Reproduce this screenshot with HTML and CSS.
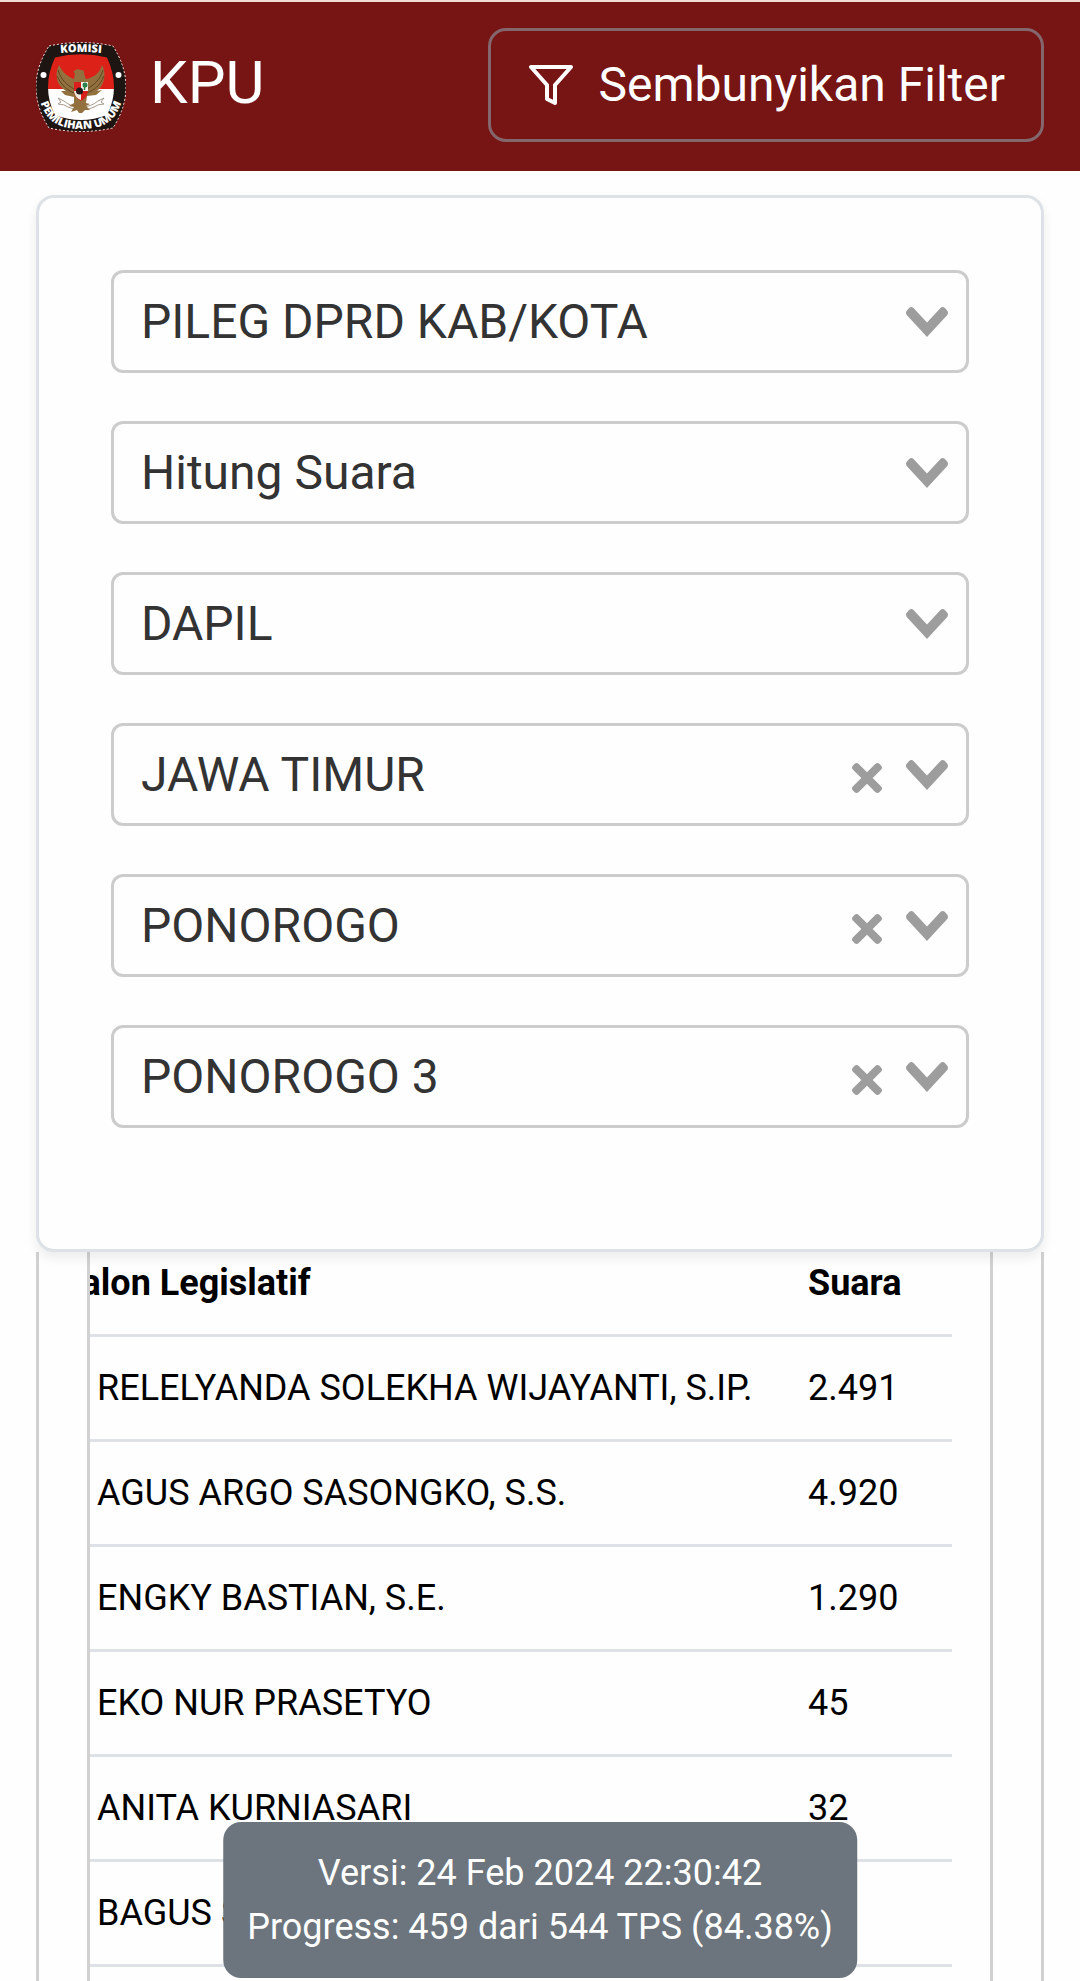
FILE: index.html
```html
<!DOCTYPE html>
<html lang="id">
<head>
<meta charset="utf-8">
<meta name="viewport" content="width=device-width, initial-scale=1">
<title>KPU - Hitung Suara</title>
<link rel="stylesheet" href="styles.css">
</head>
<body>
<svg class="sprite" aria-hidden="true">
  <symbol id="chevron" viewBox="0 0 14 10"><path d="M9.211364 7.59931l4.48338-4.867229c.407008-.441854.407008-1.158247 0-1.60046l-.73712-.80023c-.407008-.441854-1.066904-.441854-1.474243 0L7 5.198617 2.51662.33139c-.407008-.441853-1.066904-.441853-1.474243 0l-.737121.80023c-.407008.441854-.407008 1.158248 0 1.600461l4.48338 4.867228L7 10l2.211364-2.40069z"/></symbol>
  <symbol id="cross" viewBox="0 0 10 10"><path d="M6.895455 5l2.842897-2.842898c.348864-.348863.348864-.914488 0-1.263636L9.106534.261648c-.348864-.348864-.914489-.348864-1.263636 0L5 3.104545 2.157102.261648c-.348863-.348864-.914488-.348864-1.263636 0L.261648.893466c-.348864.348864-.348864.914489 0 1.263636L3.104545 5 .261648 7.842898c-.348864.348863-.348864.914488 0 1.263636l.631818.631818c.348864.348864.914773.348864 1.263636 0L5 6.895455l2.842898 2.842897c.348863.348864.914772.348864 1.263636 0l.631818-.631818c.348864-.348864.348864-.914489 0-1.263636L6.895455 5z"/></symbol>
</svg>

<header class="navbar">
  <a class="brand" href="#">
    <svg class="brand-logo" viewBox="0 0 90 90" aria-hidden="true">
      <defs>
        <path id="arc-top" d="M12 12.500Q45 7.500 78 12.500"/>
        <path id="arc-bottom" d="M2 52C8 76 18 87 45 87S82 76 88 52"/>
        <clipPath id="shield"><path d="M19 15.500Q45 9 71 15.500Q85 46 71 73Q45 83 19 73Q5 46 19 15.500Z"/></clipPath>
      </defs>
      <path d="M13 4Q45-3 77 4Q103 45 77 86Q45 93 13 86Q-13 45 13 4Z" fill="#1d1512" stroke="#f3e8e6" stroke-width="1" stroke-dasharray="2 2"/>
      <g clip-path="url(#shield)">
        <path d="M0 0H90V47H0Z" fill="#dc2119"/>
        <path d="M0 47H90V90H0Z" fill="#fff"/>
      </g>
      <circle cx="7.500" cy="33" r="3" fill="#fff"/>
      <circle cx="82.500" cy="33" r="3" fill="#fff"/>
      <path d="M22 56l6 3q7 6 17 6q10 0 17-6l6-3l-3 4l3 2q-6 0-10 3q-6 3-13 3q-7 0-13-3q-4-3-10-3l3-2Z" fill="#fff" stroke="#a79b8c" stroke-width="1"/>
      <path d="M23 23C27 31 32 35 38 37L39 31L37 30Q40 26 45 28Q49 28 48 32L50 37C57 36 64 31 66 23C71 32 68 44 61 49L66 48L60 53L51 54L50 61L54 62L50 64L54 68L49 68L46 71L43 71L41 68L35 70L38 65L33 64L38 61L38 55L29 53L25 49L30 49C21 44 18 33 23 23Z" fill="#92713f"/>
      <path d="M22 28C25 38 31 43 38 47M21 34C26 44 31 48 38 51M67 28C64 38 58 43 51 47M68 34C64 44 58 48 51 51" fill="none" stroke="#5e4423" stroke-width="1"/>
      <path d="M38 40H52V49Q51 56 45 59Q39 56 38 49Z" fill="#d9201c"/>
      <path d="M45 40H52V49H45Z" fill="#f4f1e9"/>
      <path d="M38 49H45V58Q39 56 38 49Z" fill="#f0e9df"/>
      <circle cx="49" cy="43" r="2.500" fill="#29824a"/>
      <path d="M48.500 43v5" stroke="#29824a" stroke-width="1.500"/>
      <circle cx="43.500" cy="49" r="3.500" fill="#211b19"/>
      <text class="logo-text" text-anchor="middle"><textPath href="#arc-top" startOffset="50%">KOMISI</textPath></text>
      <text class="logo-text" text-anchor="middle"><textPath href="#arc-bottom" startOffset="50%">PEMILIHAN UMUM</textPath></text>
    </svg>
    <span class="brand-name">KPU</span>
  </a>
  <button class="filter-toggle" type="button">
    <svg class="funnel" viewBox="0 0 44 40" aria-hidden="true"><path d="M2 2H42L26 20V38L18 34V20Z"/></svg>
    <span>Sembunyikan Filter</span>
  </button>
</header>

<main class="content">
  <form class="filters">
    <div class="field">
      <select aria-label="Jenis pemilihan"><option>PILEG DPRD KAB/KOTA</option></select>
      <div class="actions"><svg class="chevron" aria-hidden="true"><use href="#chevron"/></svg></div>
    </div>
    <div class="field">
      <select aria-label="Tampilan"><option>Hitung Suara</option></select>
      <div class="actions"><svg class="chevron" aria-hidden="true"><use href="#chevron"/></svg></div>
    </div>
    <div class="field">
      <select aria-label="Pembagian wilayah"><option>DAPIL</option></select>
      <div class="actions"><svg class="chevron" aria-hidden="true"><use href="#chevron"/></svg></div>
    </div>
    <div class="field">
      <select aria-label="Provinsi"><option>JAWA TIMUR</option></select>
      <div class="actions"><button class="clear" type="button" aria-label="Hapus provinsi"><svg aria-hidden="true"><use href="#cross"/></svg></button><svg class="chevron" aria-hidden="true"><use href="#chevron"/></svg></div>
    </div>
    <div class="field">
      <select aria-label="Kabupaten"><option>PONOROGO</option></select>
      <div class="actions"><button class="clear" type="button" aria-label="Hapus kabupaten"><svg aria-hidden="true"><use href="#cross"/></svg></button><svg class="chevron" aria-hidden="true"><use href="#chevron"/></svg></div>
    </div>
    <div class="field">
      <select aria-label="Daerah pemilihan"><option>PONOROGO 3</option></select>
      <div class="actions"><button class="clear" type="button" aria-label="Hapus daerah pemilihan"><svg aria-hidden="true"><use href="#cross"/></svg></button><svg class="chevron" aria-hidden="true"><use href="#chevron"/></svg></div>
    </div>
  </form>

  <section class="panel">
    <div class="panel-inner">
      <table class="results">
        <thead>
          <tr><th scope="col">Calon Legislatif</th><th class="votes" scope="col">Suara</th></tr>
        </thead>
        <tbody>
          <tr><td>RELELYANDA SOLEKHA WIJAYANTI, S.IP.</td><td>2.491</td></tr>
          <tr><td>AGUS ARGO SASONGKO, S.S.</td><td>4.920</td></tr>
          <tr><td>ENGKY BASTIAN, S.E.</td><td>1.290</td></tr>
          <tr><td>EKO NUR PRASETYO</td><td>45</td></tr>
          <tr><td>ANITA KURNIASARI</td><td>32</td></tr>
          <tr><td>BAGUS S</td><td></td></tr>
        </tbody>
      </table>
    </div>
  </section>
</main>

<div class="status" role="status">
  <div>Versi: 24 Feb 2024 22:30:42</div>
  <div>Progress: 459 dari 544 TPS (84.38%)</div>
</div>
</body>
</html>
```
FILE: styles.css
```css
* {
  box-sizing: border-box;
}

body {
  margin: 0;
  min-height: 100vh;
  display: flex;
  flex-direction: column;
  background: #fefefe;
  color: #000;
  font: 36px/54px Roboto, sans-serif;
}

.sprite {
  display: none;
}

.navbar {
  display: flex;
  align-items: center;
  justify-content: space-between;
  padding: 26px 36px 29px;
  border-top: 2px solid #f0dcd3;
  background: #771414;
}

.brand {
  display: flex;
  align-items: center;
  gap: 24px;
  color: #fff;
  font-size: 60px;
  line-height: 90px;
  text-decoration: none;
}

.brand-logo {
  width: 90px;
  height: 90px;
  margin-top: 4px;
}

.brand-name {
  padding-bottom: 4px;
}

.logo-text {
  font-family: "Open Sans", sans-serif;
  font-size: 11px;
  font-weight: 800;
  fill: #fff;
}

.filter-toggle {
  display: flex;
  align-items: center;
  gap: 26px;
  padding: 18px 36px 18px 38px;
  border: 3px solid #84666d;
  border-radius: 18px;
  background: transparent;
  color: #fff;
  font: 48px/72px Roboto, sans-serif;
}

.funnel {
  width: 44px;
  height: 40px;
  fill: none;
  stroke: #fff;
  stroke-width: 4;
  stroke-linejoin: round;
}

.content {
  flex: 1;
  display: flex;
  flex-direction: column;
  padding: 24px 36px 0;
}

.filters {
  position: relative;
  padding: 72px 72px 73px;
  border: 3px solid #dee2e6;
  border-radius: 18px;
  background: #fefefe;
  box-shadow: 0 6px 12px rgba(0, 0, 0, 0.075);
}

.field {
  display: grid;
  margin-bottom: 48px;
}

.field > * {
  grid-area: 1 / 1;
}

.field select {
  width: 100%;
  height: 103px;
  padding: 0 144px 0 27px;
  border: 3px solid #ccc;
  border-radius: 12px;
  appearance: none;
  background: transparent;
  color: #333;
  font: 48px/72px Roboto, sans-serif;
}

.actions {
  display: flex;
  align-items: center;
  justify-self: end;
  gap: 24px;
  padding-right: 21px;
  pointer-events: none;
}

.actions svg {
  display: block;
  fill: #9d9d9d;
}

.chevron {
  width: 42px;
  height: 30px;
}

.clear {
  padding: 6px 0 0;
  border: 0;
  background: none;
  pointer-events: auto;
}

.clear svg {
  width: 30px;
  height: 30px;
}

.panel {
  flex: 1;
  display: flex;
  padding: 0 48px;
  border: solid #d1d1d1;
  border-width: 0 3px;
}

.panel-inner {
  flex: 1;
  overflow: hidden;
  padding-right: 38px;
  border: solid #d1d1d1;
  border-width: 0 3px;
}

/* The table is scrolled sideways inside its panel. */
.results {
  width: calc(100% + 56px);
  margin-left: -56px;
  border-collapse: separate;
  border-spacing: 0;
}

.results th,
.results td {
  padding: 24px;
  border-bottom: 3px solid #dee2e6;
  text-align: left;
  white-space: nowrap;
}

.results th {
  padding-top: 4px;
  font-weight: 700;
}

.results td:first-child {
  padding-left: 63px;
}

.results td {
  height: 105px;
}

.results .votes {
  width: 168px;
}

.status {
  position: fixed;
  bottom: 3px;
  left: 50%;
  transform: translateX(-50%);
  padding: 24px;
  border-radius: 18px;
  background: #6c757d;
  color: #fff;
  text-align: center;
  white-space: nowrap;
}
```
